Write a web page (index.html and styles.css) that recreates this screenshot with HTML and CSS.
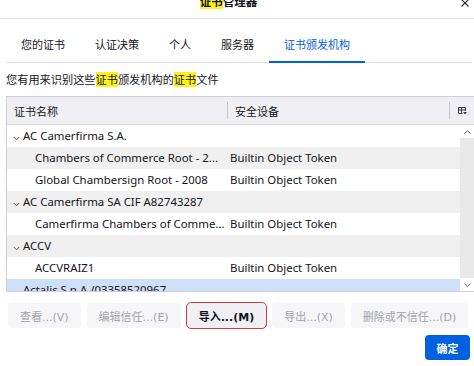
FILE: index.html
```html
<html>
  <head>
    <link rel="stylesheet" href="styles.css">
  </head>
  <body>
    <div class="titlebar">
      <span class="title"><mark>证书</mark>管理器</span>
      <svg class="close" width="8" height="8" viewBox="0 0 8 8"><path d="M0.5 0.5L7.5 7.5M7.5 0.5L0.5 7.5" stroke="#2b2a33" stroke-width="1.1" fill="none"/></svg>
    </div><!-- titlebar -->

    <div class="tabs">
      <div class="tab">您的证书</div>
      <div class="tab">认证决策</div>
      <div class="tab">个人</div>
      <div class="tab">服务器</div>
      <div class="tab tab_active">证书颁发机构</div>
    </div><!-- tabs -->

    <p class="desc">您有用来识别这些<mark>证书</mark>颁发机构的<mark>证书</mark>文件</p>

    <div class="tree">
      <div class="tree_head">
        <div class="th_name">证书名称</div>
        <div class="th_sep"></div>
        <div class="th_dev">安全设备</div>
        <div class="th_sep"></div>
        <div class="th_pick">
          <svg width="9" height="8" viewBox="0 0 9 8"><path d="M0.5 0.5H7.5V4M0.5 0.5V6.5H4.5M0.5 3H7.5M3.5 0.5V6.5" stroke="#3a3944" stroke-width="1" fill="none"/><path d="M5 5H9L7 7.5Z" fill="#3a3944"/></svg>
        </div>
      </div><!-- tree_head -->
      <div class="tree_body">
        <div class="rows">
          <div class="row">
            <div class="cell_name"><svg class="twisty" width="7" height="5" viewBox="0 0 7 5"><path d="M0.8 1L3.5 3.8L6.2 1" stroke="#5b5b66" stroke-width="1" fill="none"/></svg>AC Camerfirma S.A.</div>
            <div class="cell_dev"></div>
          </div>
          <div class="row row_alt">
            <div class="cell_name cell_child">Chambers of Commerce Root - 2...</div>
            <div class="cell_dev">Builtin Object Token</div>
          </div>
          <div class="row">
            <div class="cell_name cell_child">Global Chambersign Root - 2008</div>
            <div class="cell_dev">Builtin Object Token</div>
          </div>
          <div class="row row_alt">
            <div class="cell_name"><svg class="twisty" width="7" height="5" viewBox="0 0 7 5"><path d="M0.8 1L3.5 3.8L6.2 1" stroke="#5b5b66" stroke-width="1" fill="none"/></svg>AC Camerfirma SA CIF A82743287</div>
            <div class="cell_dev"></div>
          </div>
          <div class="row">
            <div class="cell_name cell_child">Camerfirma Chambers of Comme...</div>
            <div class="cell_dev">Builtin Object Token</div>
          </div>
          <div class="row row_alt">
            <div class="cell_name"><svg class="twisty" width="7" height="5" viewBox="0 0 7 5"><path d="M0.8 1L3.5 3.8L6.2 1" stroke="#5b5b66" stroke-width="1" fill="none"/></svg>ACCV</div>
            <div class="cell_dev"></div>
          </div>
          <div class="row">
            <div class="cell_name cell_child">ACCVRAIZ1</div>
            <div class="cell_dev">Builtin Object Token</div>
          </div>
          <div class="row row_sel">
            <div class="cell_name"><svg class="twisty" width="7" height="5" viewBox="0 0 7 5"><path d="M0.8 1L3.5 3.8L6.2 1" stroke="#5b5b66" stroke-width="1" fill="none"/></svg>Actalis S.p.A./03358520967</div>
            <div class="cell_dev"></div>
          </div>
        </div><!-- rows -->
        <div class="scrollbar">
          <svg class="arrow" width="7" height="4" viewBox="0 0 7 4"><path d="M0.5 3.5L3.5 0.7L6.5 3.5" stroke="#606068" stroke-width="1" fill="none"/></svg>
          <div class="thumb"></div>
          <svg class="arrow" width="7" height="4" viewBox="0 0 7 4"><path d="M0.5 0.5L3.5 3.3L6.5 0.5" stroke="#606068" stroke-width="1" fill="none"/></svg>
        </div><!-- scrollbar -->
      </div><!-- tree_body -->
    </div><!-- tree -->

    <div class="actions">
      <button class="btn" disabled>查看...(V)</button>
      <button class="btn" disabled>编辑信任...(E)</button>
      <button class="btn btn_focus">导入...(M)</button>
      <button class="btn" disabled>导出...(X)</button>
      <button class="btn" disabled>删除或不信任...(D)</button>
    </div><!-- actions -->
    <div class="footer">
      <button class="btn_primary">确定</button>
    </div><!-- footer -->
  </body>
</html>
```

FILE: styles.css
```css
body { margin: 0; background: #fff; color: #15141a; font-family: "Noto Sans", "Noto Sans CJK SC", sans-serif; font-size: 11px; }
mark { background: #fff21c; color: inherit; }

.titlebar { display: grid; grid-template-columns: 1fr auto 1fr; height: 18px; border-bottom: 1px solid #e6e6ea; overflow: hidden; }
.title { grid-column: 2; margin: -4px 17px 0 0; font-size: 11.5px; line-height: 12px; font-weight: bold; }
.close { justify-self: end; margin: -1px 5px 0 0; }

.tabs { display: flex; margin: 10px 2px 0 6px; border-bottom: 1px solid #e0e0e6; }
.tab { padding: 0 15px; height: 32px; line-height: 32px; border-bottom: 2px solid transparent; margin-bottom: -1px; }
.tab_active { color: #0061e0; border-bottom-color: #0061e0; }

.desc { margin: 8px 0 8px 6px; line-height: 17px; font-size: 11.2px; }

.tree { margin-left: 6px; border: 1px solid #cfcfd8; border-right: 0; }
.tree_head { display: flex; align-items: center; height: 27px; background: #f0f0f4; border-bottom: 1px solid #d7d7db; }
.th_name { width: 220px; padding-left: 7px; box-sizing: border-box; }
.th_sep { width: 1px; height: 17px; background: #c8c8cf; }
.th_dev { flex: 1; padding-left: 7px; }
.th_pick { width: 24px; display: flex; justify-content: center; }

.tree_body { display: flex; height: 166px; overflow: hidden; }
.rows { flex: 1; }
.row { display: flex; height: 22px; line-height: 22px; white-space: nowrap; font-size: 11.4px; }
.row_alt { background: #f0f0f0; }
.row_sel { background: #cde0f7; }
.cell_name { width: 220px; padding-left: 6px; box-sizing: border-box; overflow: hidden; }
.cell_child { padding-left: 28px; }
.cell_dev { flex: 1; padding-left: 3px; }
.twisty { margin: 0 3px 0 0; vertical-align: -1px; }

.scrollbar { width: 14px; display: flex; flex-direction: column; align-items: center; }
.arrow { margin: 5px 0 4px; }
.thumb { flex: 1; align-self: stretch; background: #e8e8e8; }

.actions { display: flex; gap: 6px; margin: 11px 0 0 8px; }
.btn { height: 25px; padding: 0 12px; border: 0; border-radius: 4px; background: #f6f6f8; color: #a3a3a8; font-family: "DejaVu Sans", "Noto Sans CJK SC", sans-serif; font-size: 11px; }
.btn_focus { background: #f0f0f4; color: #15141a; font-weight: bold; outline: 1.5px solid #cf3b45; }

.footer { display: flex; justify-content: flex-end; margin: 7px 4px 0 0; }
.btn_primary { width: 45px; height: 25px; border: 0; border-radius: 4px; background: #0061e0; color: #fff; font-family: inherit; font-size: 11px; font-weight: bold; }
```
